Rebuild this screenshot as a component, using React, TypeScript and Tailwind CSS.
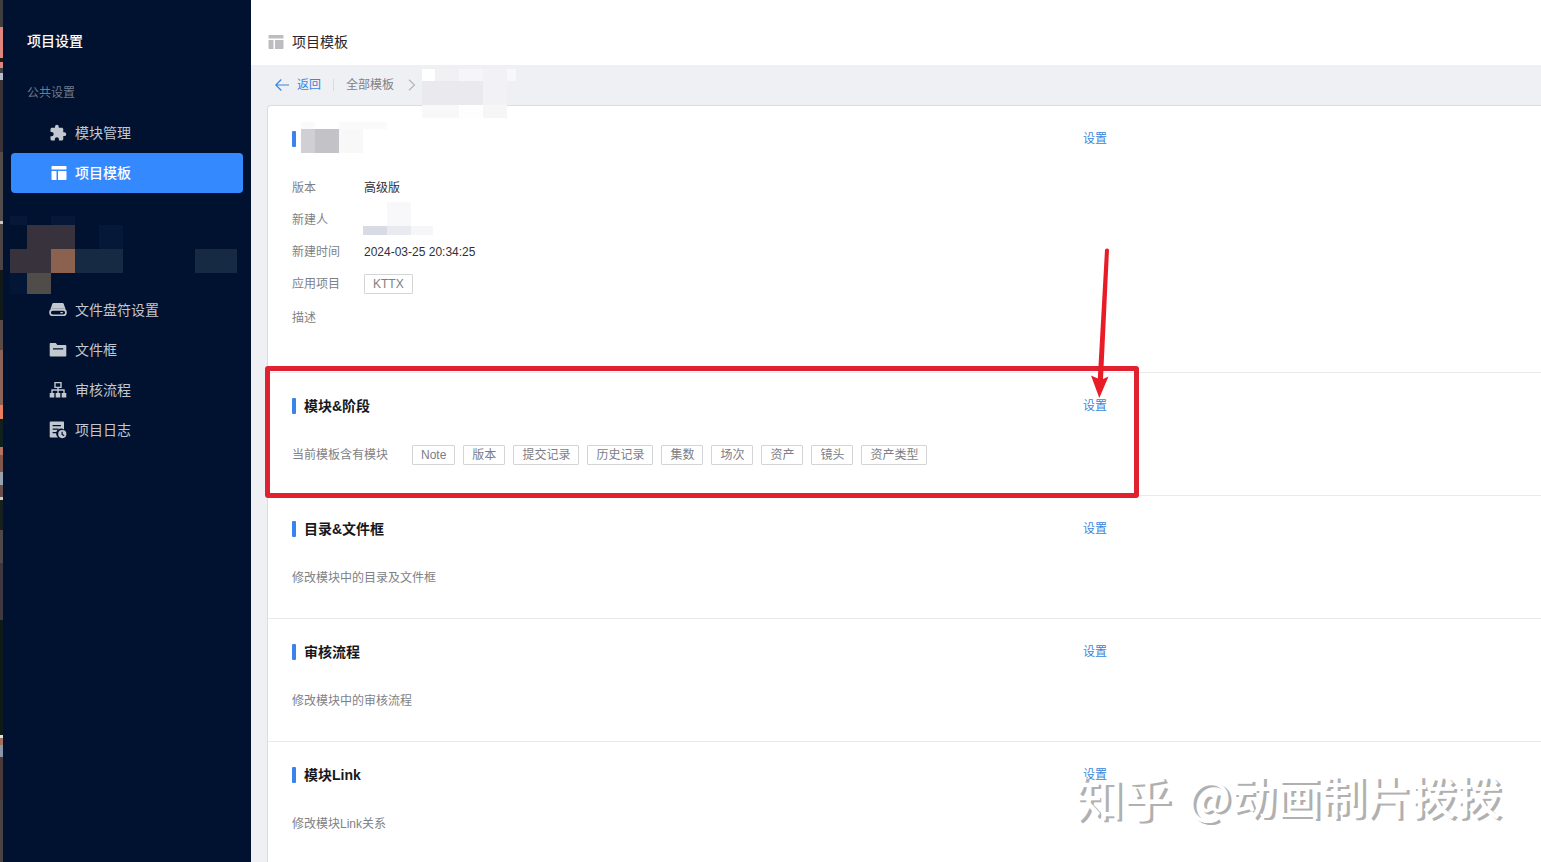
import React from 'react';
import { MdExtension } from 'react-icons/md';

type Rect = [x: number, y: number, w: number, h: number, fill: string];

const Mosaic = ({ width, height, rects, className = '' }: { width: number; height: number; rects: Rect[]; className?: string }) => (
  <svg width={width} height={height} className={className} shapeRendering="crispEdges" aria-hidden="true">
    {rects.map(([x, y, w, h, fill], i) => (
      <rect key={i} x={x} y={y} width={w} height={h} fill={fill} />
    ))}
  </svg>
);

const teamMosaic: Rect[] = [
  [0, 0, 17, 9, '#051838'],
  [41, 0, 24, 9, '#051838'],
  [0, 9, 17, 24, '#01122f'],
  [17, 9, 48, 24, '#38323d'],
  [89, 9, 24, 24, '#051838'],
  [0, 33, 41, 24, '#38323d'],
  [41, 33, 24, 24, '#8b6150'],
  [65, 33, 48, 24, '#172a43'],
  [185, 33, 42, 24, '#172a43'],
  [0, 57, 17, 21, '#031635'],
  [17, 57, 24, 21, '#504c49'],
];

const crumbMosaic: Rect[] = [
  [0, 0, 13, 12, '#ffffff'],
  [13, 0, 24, 12, '#f1f1f4'],
  [37, 0, 24, 12, '#f6f6f8'],
  [61, 0, 24, 12, '#f2f2f5'],
  [85, 0, 9, 12, '#f8f8fa'],
  [0, 12, 61, 24, '#e9e9ee'],
  [61, 12, 24, 24, '#f2f2f5'],
  [85, 12, 9, 24, '#eff0f4'],
  [0, 36, 37, 13, '#f8f8f8'],
  [37, 36, 24, 13, '#fefefe'],
  [61, 36, 24, 13, '#f6f6f7'],
];

const titleMosaic: Rect[] = [
  [0, 0, 14, 7, '#fafafa'],
  [38, 0, 48, 7, '#fafafa'],
  [0, 7, 14, 24, '#d0d0d4'],
  [14, 7, 24, 24, '#c2c2c7'],
  [38, 7, 24, 24, '#f8f8f8'],
];

const creatorMosaic: Rect[] = [
  [24, 0, 24, 24, '#f8f8fa'],
  [0, 24, 24, 9, '#d9dbe4'],
  [24, 24, 24, 9, '#e9eaf0'],
  [48, 24, 22, 9, '#f6f6f8'],
];

// slice of the artwork that shows at the left of the panel
const artwork: [number, string][] = [
  [27, '#403e41'], [31, '#e0857d'], [4, '#201a1c'], [6, '#e0857d'], [5, '#45414a'], [7, '#b4bccb'],
  [72, '#3a3438'], [69, '#524c4a'], [3, '#c8c8c8'], [46, '#4b4344'], [50, '#121a19'], [30, '#5a4b48'],
  [55, '#8b6457'], [14, '#e8805f'], [28, '#10201c'], [8, '#b5725f'], [17, '#82564b'], [13, '#97a1b0'],
  [12, '#6a4f4a'], [3, '#cccccc'], [30, '#16201e'], [33, '#50494a'], [57, '#403840'], [115, '#0e1a18'],
  [3, '#dddddd'], [7, '#a17060'], [12, '#8b95a5'], [43, '#4b3a3c'], [62, '#4a4242'],
];

const LayoutIcon = ({ className = '' }: { className?: string }) => (
  <svg viewBox="0 0 16 16" className={className} fill="currentColor" aria-hidden="true">
    <path d="M1.300 1h13.400q.8 0 .8.8v2.700H.5V1.800q0-.8.8-.8zM.5 6h5v9H1.300q-.8 0-.8-.8zM7 6h8.500v8.200q0 .8-.8.8H7z" />
  </svg>
);

const DriveIcon = () => (
  <svg viewBox="0 0 18 18" className="size-[18px]" fill="currentColor" aria-hidden="true">
    <path d="M4.500 2h9q.9 0 1.200.8l1.900 5.700q-1-.7-2.200-.7H3.600q-1.200 0-2.200.7l1.900-5.700q.3-.8 1.200-.8z" />
    <path fillRule="evenodd" d="M3.800 7.800h10.400a3.600 3.600 0 0 1 0 7.200H3.800a3.600 3.600 0 0 1 0-7.200zm0 1.900a1.900 1.900 0 0 0 0 3.800h10.400a1.900 1.900 0 0 0 0-3.800zM11.400 10.900h2.500v1.400h-2.500z" />
  </svg>
);

const FolderIcon = () => (
  <svg viewBox="0 0 18 18" className="size-[18px]" fill="currentColor" aria-hidden="true">
    <path fillRule="evenodd" d="M1.500 2h5.200l1.700 2h8.100q.8 0 .8.8v9.900q0 .8-.8.8h-15q-.8 0-.8-.8V2.800q0-.8.8-.8zM4 7.200v1.400h10.200V7.200z" />
  </svg>
);

const FlowIcon = () => (
  <svg viewBox="0 0 18 18" className="size-[18px]" fill="currentColor" aria-hidden="true">
    <path d="M6 1.600h6v4.800H6zM9 6.400v6M3 12.400V9h12v3.400" fill="none" stroke="currentColor" strokeWidth="1.400" />
    <path d="M.7 12h4.600v4.600H.7zM6.700 12h4.600v4.600H6.700zM12.700 12h4.600v4.600h-4.600z" />
  </svg>
);

const LogIcon = () => (
  <svg viewBox="0 0 18 18" className="size-[18px]" fill="currentColor" aria-hidden="true">
    <path fillRule="evenodd" d="M1.500 .5h12.700q.8 0 .8.8v7.200a4.800 4.800 0 0 0-5.900 8H1.500q-.8 0-.8-.8V1.300q0-.8.8-.8zM3.600 4v1.300h8.300V4zM3.600 7.500v1.300h6V7.500zM3.600 11v1.300h3.600V11z" />
    <path fillRule="evenodd" d="M13.300 9a4.100 4.100 0 1 1 0 8.200 4.100 4.100 0 0 1 0-8.200zm-.8 1.800v3l2.400 1.400.6-1-1.800-1.100v-2.300z" />
  </svg>
);

const NavItem = ({ icon, label, active }: { icon: React.ReactNode; label: string; active?: boolean }) => (
  <a
    href="#"
    aria-current={active ? 'page' : undefined}
    className={
      active
        ? 'flex h-10 items-center gap-2 rounded bg-[#3589fe] pl-10 text-sm font-medium text-white'
        : 'flex h-10 items-center gap-2 pl-[38px] text-sm text-[#c3c7cf]'
    }
  >
    {icon}
    {label}
  </a>
);

const Tag = ({ children }: { children: React.ReactNode }) => (
  <span className="flex h-5 items-center rounded-[1px] border border-[#d4d5d8] px-2 text-xs text-[#7d7e83]">{children}</span>
);

const SectionTitle = ({ children }: { children: React.ReactNode }) => (
  <div className="flex h-[18px] max-w-[815px] items-center justify-between">
    <h2 className="flex items-center gap-2 text-sm font-bold text-[#17181c]">
      <span className="h-4 w-1 rounded-[1px] bg-[#3a83ee]" />
      {children}
    </h2>
    <a href="#" className="text-xs text-[#3a86dc]">设置</a>
  </div>
);

const Section = ({ title, children }: { title: string; children: React.ReactNode }) => (
  <section className="relative border-b border-[#e9eaee] px-6 pt-6 pb-[30px]">
    <SectionTitle>{title}</SectionTitle>
    <div className="mt-[30px] flex h-5 items-center text-xs text-[#808186]">{children}</div>
  </section>
);

const InfoRow = ({ label, children }: { label: string; children?: React.ReactNode }) => (
  <div className="flex h-8 items-center">
    <dt className="w-[72px] text-[#808186]">{label}</dt>
    <dd className="text-[#303138]">{children}</dd>
  </div>
);

const modules = ['Note', '版本', '提交记录', '历史记录', '集数', '场次', '资产', '镜头', '资产类型'];

const App = () => {
  return (
    <div className="relative flex h-screen overflow-hidden bg-[#eff0f4] font-['Liberation_Sans','Noto_Sans_CJK_SC',sans-serif]">
      <div className="w-[3px] shrink-0 overflow-hidden bg-[#4a4242]">
        {artwork.map(([height, backgroundColor], i) => (
          <div key={i} style={{ height, backgroundColor }} />
        ))}
      </div>

      <aside className="w-[248px] shrink-0 bg-[#00122f] px-2">
        <h1 className="pt-[31px] pl-4 text-sm leading-5 font-medium text-white">项目设置</h1>
        <h2 className="mt-8 pl-4 text-xs leading-5 text-[#6f7a8b]">公共设置</h2>
        <nav className="mt-[10px]">
          <NavItem icon={<MdExtension className="size-[18px]" />} label="模块管理" />
          <NavItem icon={<LayoutIcon className="size-4" />} label="项目模板" active />
        </nav>
        <Mosaic width={227} height={78} rects={teamMosaic} className="mt-[23px] -ml-px" />
        <nav className="-mt-1">
          <NavItem icon={<DriveIcon />} label="文件盘符设置" />
          <NavItem icon={<FolderIcon />} label="文件框" />
          <NavItem icon={<FlowIcon />} label="审核流程" />
          <NavItem icon={<LogIcon />} label="项目日志" />
        </nav>
      </aside>

      <main className="flex min-w-0 flex-1 flex-col">
        <header className="flex h-[65px] shrink-0 items-center gap-2 bg-white pt-[18px] pl-[17px] text-sm text-[#26272d]">
          <LayoutIcon className="size-4 text-[#bdbdc1]" />
          项目模板
        </header>

        <div className="relative z-10 flex h-10 shrink-0 items-center pl-6 text-xs">
          <a href="#" className="flex items-center gap-2 text-[#3a86dc]">
            <svg width="14" height="14" viewBox="0 0 14 14" fill="none" stroke="currentColor" strokeWidth="1.200" aria-hidden="true">
              <path d="M14 7H.8M6.300 1.500.8 7l5.500 5.500" />
            </svg>
            返回
          </a>
          <span className="mx-3 h-3 w-px bg-[#d9dade]" />
          <a href="#" className="text-[#808186]">全部模板</a>
          <svg width="8" height="12" viewBox="0 0 8 12" className="ml-[14px]" fill="none" stroke="#b5b6ba" strokeWidth="1.200" aria-hidden="true">
            <path d="m1 .8 5.500 5.200L1 11.200" />
          </svg>
          <Mosaic width={94} height={49} rects={crumbMosaic} className="absolute top-1 left-[171px]" />
        </div>

        <div className="ml-4 flex-1 rounded-tl-sm border-t border-l border-[#dcdde2] bg-white">
          <section className="border-b border-[#e9eaee] px-6 pt-6 pb-9">
            <SectionTitle>
              <span className="relative h-[18px] w-[62px]">
                <Mosaic width={86} height={31} rects={titleMosaic} className="absolute -top-2 -left-[3px]" />
              </span>
            </SectionTitle>
            <dl className="mt-6 text-xs">
              <InfoRow label="版本">高级版</InfoRow>
              <InfoRow label="新建人">
                <Mosaic width={70} height={33} rects={creatorMosaic} className="-mt-1 -ml-px" />
              </InfoRow>
              <InfoRow label="新建时间">2024-03-25 20:34:25</InfoRow>
              <InfoRow label="应用项目">
                <Tag>KTTX</Tag>
              </InfoRow>
              <div className="flex h-9 items-center text-[#808186]">
                <dt>描述</dt>
              </div>
            </dl>
          </section>

          <Section title="模块&阶段">
            <span className="w-[120px]">当前模板含有模块</span>
            <div className="flex gap-2">
              {modules.map((m) => (
                <Tag key={m}>{m}</Tag>
              ))}
            </div>
            <div className="pointer-events-none absolute -top-[7px] -left-[3px] h-[132px] w-[874px] rounded-[3px] border-5 border-[#e02230]" />
            <svg width="20" height="150" viewBox="0 0 20 150" className="pointer-events-none absolute -top-[125px] left-[822px]" fill="#e81c26" aria-hidden="true">
              <path d="M15 1.800q2-2.400 4 0L13 131l5.500-2.500L9.300 150 1 127.500l6.800 3z" />
            </svg>
          </Section>

          <Section title="目录&文件框">修改模块中的目录及文件框</Section>
          <Section title="审核流程">修改模块中的审核流程</Section>
          <Section title="模块Link">修改模块Link关系</Section>
        </div>
      </main>

      <div className="pointer-events-none absolute right-10 bottom-9 flex items-center gap-4 font-['Noto_Sans_CJK_SC',sans-serif] text-[45px] leading-[60px] font-medium whitespace-nowrap text-white [text-shadow:3px_2px_0_#b0b0b0]">
        <span className="text-5xl leading-[60px]">知乎</span>
        <span>@动画制片拨拨</span>
      </div>
    </div>
  );
};

export default App;
